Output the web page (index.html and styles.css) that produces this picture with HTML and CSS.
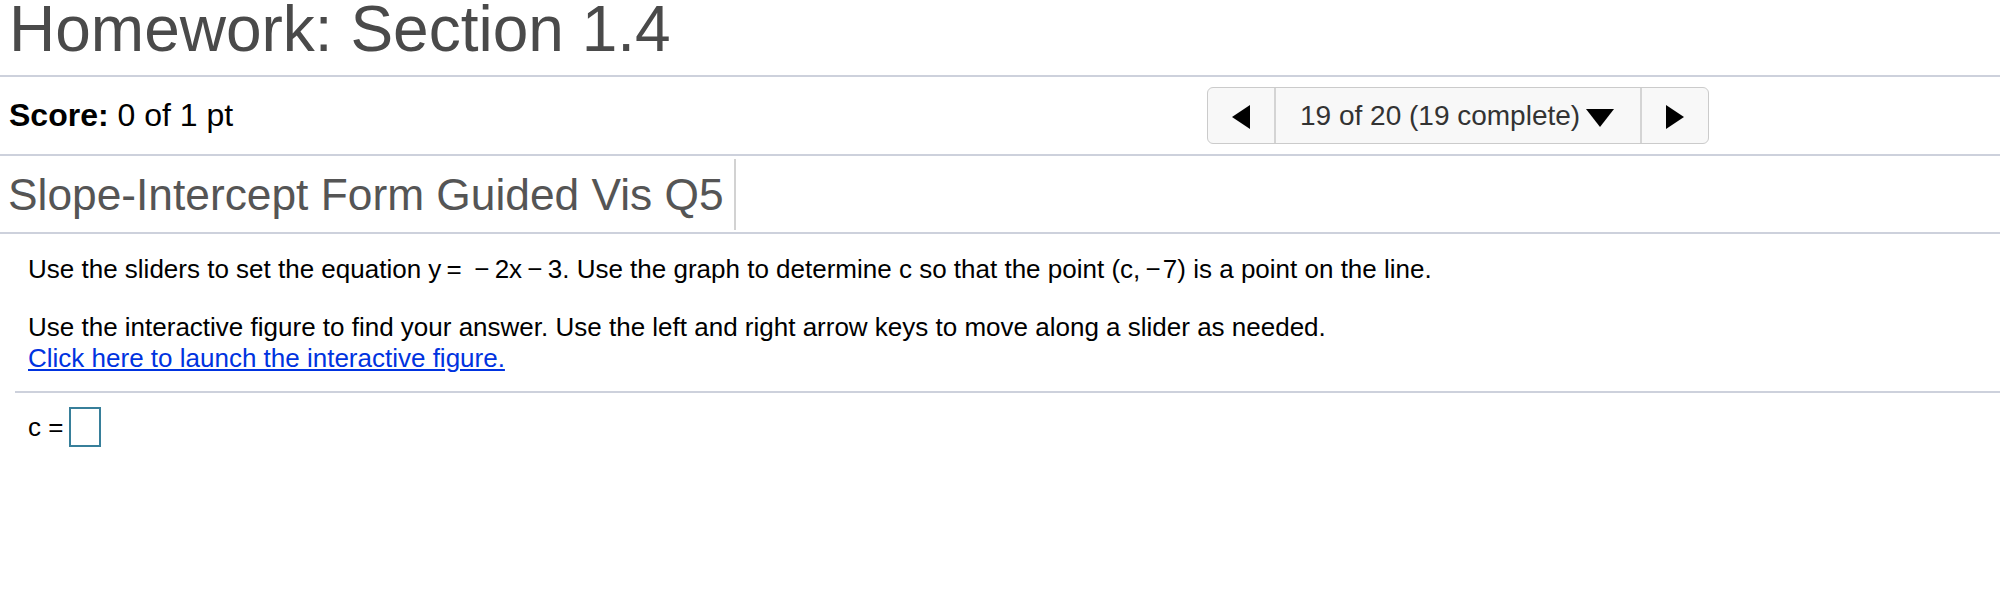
FILE: index.html
```html
<!DOCTYPE html>
<html lang="en">
<head>
<meta charset="utf-8">
<title>Homework: Section 1.4</title>
<link rel="stylesheet" href="styles.css">
</head>
<body>
<header class="hw-header">
  <h1 class="hw-title">Homework: Section 1.4</h1>
</header>
<div class="score-bar">
  <div class="score"><b>Score:</b> 0 of 1 pt</div>
  <nav class="qnav">
    <span class="nav-btn"><span class="tri-left"></span></span>
    <span class="nav-mid">19 of 20 (19 complete)<span class="tri-down"></span></span>
    <span class="nav-btn"><span class="tri-right"></span></span>
  </nav>
</div>
<div class="q-head">
  <h2 class="q-title">Slope-Intercept Form Guided Vis Q5</h2>
</div>
<div class="q-body">
  <p class="q-text">Use the sliders to set the equation y<span class="thin">&#8201;</span>=<span class="thin">&#8201;</span> &#8722;<span class="thin">&#8201;</span>2x<span class="thin">&#8201;</span>&#8722;<span class="thin">&#8201;</span>3. Use the graph to determine c so that the point (c,<span class="thin">&#8201;</span>&#8722;<span class="thin">&#8202;</span>7) is a point on the line.</p>
  <p class="q-text q-last">Use the interactive figure to find your answer. Use the left and right arrow keys to move along a slider as needed.<br><a class="q-link" href="#">Click here to launch the interactive figure.</a></p>
</div>
<div class="answer">
  <span class="ans-label">c =</span><span class="ans-box"></span>
</div>
</body>
</html>
```
FILE: styles.css
```css
html, body {
  margin: 0;
  padding: 0;
  background: #ffffff;
}
body {
  font-family: "Liberation Sans", Arial, Helvetica, sans-serif;
  color: #000000;
}
.hw-header {
  padding: 2px 0 19px 9px;
  border-bottom: 2px solid #cdd1dc;
}
.hw-title {
  margin: 0;
  font-size: 64px;
  line-height: 54px;
  font-weight: normal;
  color: #4a4a4a;
}
.score-bar {
  display: flex;
  align-items: center;
  justify-content: space-between;
  height: 77px;
  padding: 0 291px 0 9px;
  border-bottom: 2px solid #cdd1dc;
}
.score {
  font-size: 32px;
  line-height: 37px;
  color: #000;
}
.score b {
  font-weight: bold;
}
.qnav {
  display: flex;
  box-sizing: border-box;
  height: 57px;
  width: 502px;
  border: 1px solid #cbcbcb;
  border-radius: 6px;
  background: #f8f8f8;
}
.nav-btn {
  display: flex;
  align-items: center;
  justify-content: center;
  width: 66px;
}
.nav-mid {
  flex: 1;
  display: flex;
  align-items: center;
  gap: 6px;
  padding: 0 0 0 24px;
  border-left: 2px solid #d4d4d4;
  border-right: 2px solid #d4d4d4;
  font-size: 28px;
  color: #333333;
}
.tri-left {
  width: 0;
  height: 0;
  border-top: 12px solid transparent;
  border-bottom: 12px solid transparent;
  border-right: 18px solid #000;
  margin-top: 2px;
}
.tri-right {
  width: 0;
  height: 0;
  border-top: 12px solid transparent;
  border-bottom: 12px solid transparent;
  border-left: 18px solid #000;
  margin-top: 2px;
}
.tri-down {
  width: 0;
  height: 0;
  border-left: 14px solid transparent;
  border-right: 14px solid transparent;
  border-top: 18px solid #000;
  margin-top: 4px;
}
.q-head {
  display: flex;
  border-bottom: 2px solid #cdd1dc;
}
.q-title {
  margin: 3px 0 2px 8px;
  padding-right: 10px;
  border-right: 2px solid #d2d2d2;
  font-size: 44.3px;
  line-height: 71px;
  font-weight: normal;
  color: #555555;
}
.q-body {
  padding: 20px 0 17px 28px;
}
.q-text {
  margin: 0 0 27px 0;
  font-size: 26px;
  line-height: 31px;
  color: #000;
}
.q-text.q-last {
  margin-bottom: 0;
}
.q-link {
  color: #0033e0;
  text-decoration: underline;
}
.answer {
  display: flex;
  align-items: center;
  margin-left: 15px;
  padding: 14px 0 0 13px;
  border-top: 2px solid #cdd1dc;
  font-size: 26px;
}
.ans-label {
  line-height: 31px;
}
.ans-box {
  box-sizing: border-box;
  width: 32px;
  height: 40px;
  margin-left: 6px;
  border: 2px solid #377f9a;
  background: #fff;
}
```
